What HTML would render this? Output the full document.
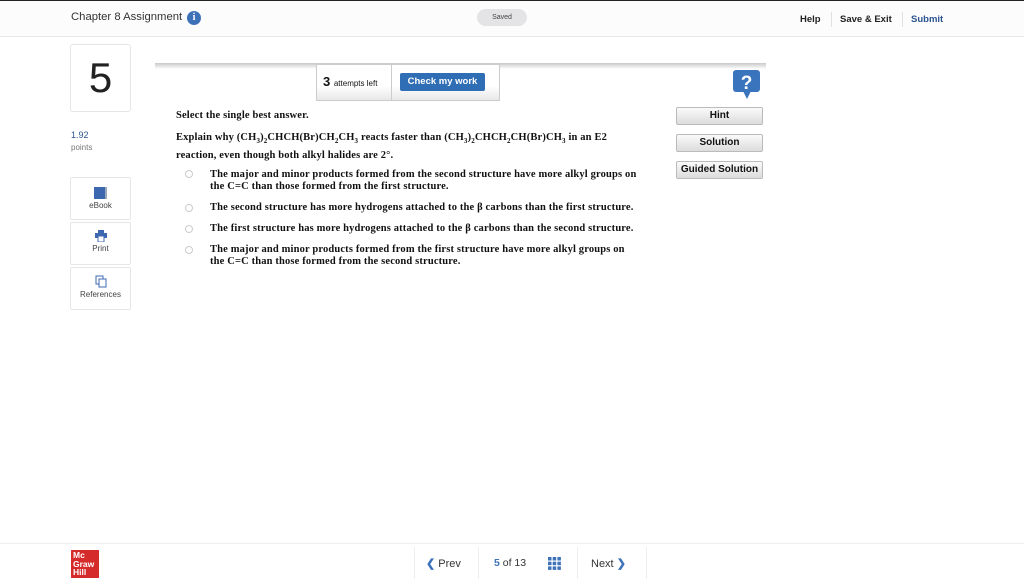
<!DOCTYPE html><html><head><style>
body{margin:0;width:1024px;height:584px;background:#fff;font-family:"Liberation Sans",sans-serif;position:relative;overflow:hidden;color:#222}
.a{position:absolute}
.sf{font-family:"Liberation Serif",serif;font-weight:bold;font-size:10.5px;letter-spacing:0.15px;color:#111;white-space:nowrap}
.btn{position:absolute;left:676px;width:85px;height:16px;border:1px solid #bbb;border-radius:2px;background:linear-gradient(#fafafa,#dcdcdc);font-size:10px;font-weight:bold;text-align:center;line-height:16px;color:#111}
.side{position:absolute;left:70px;width:59px;height:41px;border:1px solid #e6e6e6;border-radius:2px;font-size:8px;color:#444;text-align:center}
.rad{position:absolute;left:185px;width:6px;height:6px;border:1px solid #ccc;border-radius:50%}
</style></head><body>
<div class="a" style="left:0;top:0;width:1024px;height:1px;background:#222"></div>
<div class="a" style="left:0;top:1px;width:1024px;height:35px;background:#fcfcfc;border-bottom:1px solid #e8e8e8"></div>
<div class="a" style="left:71px;top:11px;font-size:11.3px;color:#333">Chapter 8 Assignment</div>
<div class="a" style="left:187px;top:11px;width:14px;height:14px;border-radius:50%;background:#3d72b8;color:#fff;font-size:10px;font-weight:bold;text-align:center;line-height:14px;font-family:'Liberation Serif',serif">i</div>
<div class="a" style="left:477px;top:9px;width:50px;height:17px;border-radius:9px;background:#e4e4e6;font-size:7px;text-align:center;line-height:17px;color:#444">Saved</div>
<div class="a" style="left:800px;top:14px;font-size:9.5px;font-weight:bold;color:#222">Help</div>
<div class="a" style="left:831px;top:12px;width:1px;height:15px;background:#e0e0e0"></div>
<div class="a" style="left:840px;top:14px;font-size:9.5px;font-weight:bold;color:#222">Save &amp; Exit</div>
<div class="a" style="left:902px;top:12px;width:1px;height:15px;background:#e0e0e0"></div>
<div class="a" style="left:911px;top:14px;font-size:9.5px;font-weight:bold;color:#2b5390">Submit</div>

<div class="a" style="left:70px;top:44px;width:59px;height:66px;border:1px solid #e6e6e6;border-radius:3px;font-size:42px;text-align:center;line-height:66px;color:#222">5</div>
<div class="a" style="left:71px;top:130px;font-size:9px;color:#2b5390">1.92</div>
<div class="a" style="left:71px;top:143px;font-size:8px;color:#777">points</div>

<div class="side" style="top:177px"><div style="margin:9px auto 0;width:11px;height:12px;background:#3d68b0;border-right:2px solid #9ab"></div><div style="margin-top:2px">eBook</div></div>
<div class="side" style="top:222px"><svg style="margin-top:7px" width="12" height="12" viewBox="0 0 12 12"><rect x="3" y="0" width="6" height="3" fill="#3d68b0"/><rect x="0" y="3" width="12" height="5" fill="#3d68b0"/><rect x="3" y="6" width="6" height="6" fill="#fff" stroke="#3d68b0"/></svg><div style="margin-top:0">Print</div></div>
<div class="side" style="top:267px"><svg style="margin-top:7px" width="12" height="13" viewBox="0 0 12 13"><rect x="1" y="1" width="7" height="8" fill="#fff" stroke="#3d68b0"/><rect x="4" y="4" width="7" height="8" fill="#fff" stroke="#3d68b0"/></svg><div style="margin-top:0">References</div></div>

<div class="a" style="left:155px;top:63px;width:611px;height:6px;background:linear-gradient(#c8c8c8,#fff)"></div>
<div class="a" style="left:316px;top:64px;width:182px;height:35px;border:1px solid #ccc;background:linear-gradient(#fff 60%,#e8e8e8)"></div>
<div class="a" style="left:391px;top:64px;width:1px;height:36px;background:#ccc"></div>
<div class="a" style="left:323px;top:74px;font-size:13px;font-weight:bold;color:#111">3 <span style="font-size:8px;font-weight:normal">attempts left</span></div>
<div class="a" style="left:400px;top:73px;width:85px;height:18px;border-radius:2px;background:#2f6db5;color:#fff;font-size:9.5px;font-weight:bold;text-align:center;line-height:18px">Check my work</div>
<svg class="a" style="left:733px;top:70px" width="29" height="30" viewBox="0 0 29 30"><rect x="0" y="0" width="27" height="22" rx="3" fill="#3a74bd"/><path d="M10 21 L14 29 L18 21Z" fill="#3a74bd"/><text x="13.5" y="19" text-anchor="middle" font-size="19" font-weight="bold" fill="#fff" font-family="Liberation Sans">?</text></svg>
<div class="btn" style="top:107px">Hint</div>
<div class="btn" style="top:134px">Solution</div>
<div class="btn" style="top:161px">Guided Solution</div>

<div class="a sf" style="left:176px;top:110px">Select the single best answer.</div>
<div class="a sf" style="left:176px;top:132px">Explain why (CH<sub style="font-size:7px">3</sub>)<sub style="font-size:7px">2</sub>CHCH(Br)CH<sub style="font-size:7px">2</sub>CH<sub style="font-size:7px">3</sub> reacts faster than (CH<sub style="font-size:7px">3</sub>)<sub style="font-size:7px">2</sub>CHCH<sub style="font-size:7px">2</sub>CH(Br)CH<sub style="font-size:7px">3</sub> in an E2</div>
<div class="a sf" style="left:176px;top:150px">reaction, even though both alkyl halides are 2°.</div>
<div class="rad" style="top:170px"></div><div class="a sf" style="left:210px;top:169px;line-height:12px">The major and minor products formed from the second structure have more alkyl groups on<br>the C=C than those formed from the first structure.</div>
<div class="rad" style="top:204px"></div><div class="a sf" style="left:210px;top:202px">The second structure has more hydrogens attached to the β carbons than the first structure.</div>
<div class="rad" style="top:225px"></div><div class="a sf" style="left:210px;top:223px">The first structure has more hydrogens attached to the β carbons than the second structure.</div>
<div class="rad" style="top:246px"></div><div class="a sf" style="left:210px;top:244px;line-height:12px">The major and minor products formed from the first structure have more alkyl groups on<br>the C=C than those formed from the second structure.</div>

<div class="a" style="left:0;top:543px;width:1024px;height:1px;background:#eee"></div>
<div class="a" style="left:71px;top:550px;width:28px;height:28px;background:#d52b2b;color:#fff;font-size:8.5px;font-weight:bold;line-height:8.5px;padding:1px 0 0 2px;box-sizing:border-box">Mc<br>Graw<br>Hill</div>
<div class="a" style="left:414px;top:547px;width:1px;height:32px;background:#eee"></div>
<div class="a" style="left:478px;top:547px;width:1px;height:32px;background:#eee"></div>
<div class="a" style="left:577px;top:547px;width:1px;height:32px;background:#eee"></div>
<div class="a" style="left:646px;top:547px;width:1px;height:32px;background:#eee"></div>
<div class="a" style="left:426px;top:557px;font-size:11px;color:#333"><span style="color:#3d72b8;font-weight:bold">&#x276E;</span> Prev</div>
<div class="a" style="left:494px;top:557px;font-size:10.5px;color:#333"><b style="color:#3d72b8">5</b> of 13</div>
<svg class="a" style="left:548px;top:557px" width="13" height="13" viewBox="0 0 13 13" fill="#3d72b8"><rect x="0" y="0" width="3.5" height="3.5"/><rect x="4.7" y="0" width="3.5" height="3.5"/><rect x="9.4" y="0" width="3.5" height="3.5"/><rect x="0" y="4.7" width="3.5" height="3.5"/><rect x="4.7" y="4.7" width="3.5" height="3.5"/><rect x="9.4" y="4.7" width="3.5" height="3.5"/><rect x="0" y="9.4" width="3.5" height="3.5"/><rect x="4.7" y="9.4" width="3.5" height="3.5"/><rect x="9.4" y="9.4" width="3.5" height="3.5"/></svg>
<div class="a" style="left:591px;top:557px;font-size:11px;color:#333">Next <span style="color:#3d72b8;font-weight:bold">&#x276F;</span></div>
</body></html>
